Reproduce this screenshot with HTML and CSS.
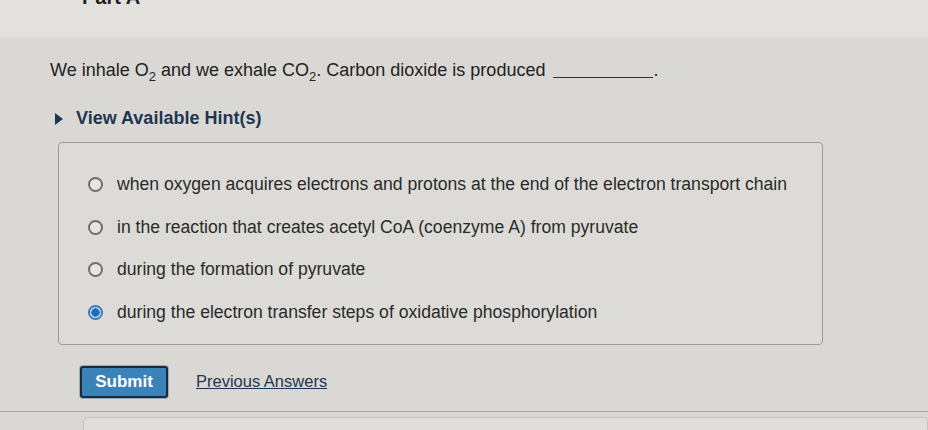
FILE: index.html
```html
<!DOCTYPE html>
<html lang="en">
<head>
    <meta charset="UTF-8">
    <title>Part A</title>
    <link rel="stylesheet" href="styles.css">
</head>
<body>
    <div class="top-strip">
        <h2 class="part-title">Part A</h2>
    </div>

    <div class="question">
        <p class="prompt">We inhale O<sub>2</sub> and we exhale CO<sub>2</sub>. Carbon dioxide is produced <span class="blank"></span>.</p>

        <div class="hints"><span class="caret"></span>View Available Hint(s)</div>

        <div class="choices">
            <label class="choice"><span class="radio"></span>when oxygen acquires electrons and protons at the end of the electron transport chain</label>
            <label class="choice"><span class="radio"></span>in the reaction that creates acetyl CoA (coenzyme A) from pyruvate</label>
            <label class="choice"><span class="radio"></span>during the formation of pyruvate</label>
            <label class="choice"><span class="radio checked"></span>during the electron transfer steps of oxidative phosphorylation</label>
        </div>

        <div class="actions">
            <button class="submit">Submit</button>
            <a href="#" class="prev">Previous Answers</a>
        </div>
    </div>

    <div class="next-part">
        <div class="next-box"></div>
    </div>
</body>
</html>
```

FILE: styles.css
```css
body {
    margin: 0;
    font-family: "Liberation Sans", Arial, sans-serif;
    background-color: #dad8d4;
    color: #2a2a2a;
    height: 430px;
    overflow: hidden;
}
.top-strip {
    height: 38px;
    background-color: #e2e1de;
    overflow: hidden;
}
.part-title {
    margin: -14px 0 0 82px;
    font-size: 20px;
    color: #222;
}
.question {
    padding: 19px 0 0 50px;
}
.prompt {
    margin: 0;
    font-size: 18px;
    line-height: 26px;
    color: #222;
}
.prompt sub {
    font-size: 13px;
    line-height: 0;
}
.blank {
    display: inline-block;
    width: 100px;
    margin-left: 3px;
    border-bottom: 1px solid #333;
    vertical-align: -2px;
}
.hints {
    margin: 25px 0 0 5px;
    font-size: 18px;
    font-weight: bold;
    color: #1f3552;
    display: flex;
    align-items: center;
}
.caret {
    width: 0;
    height: 0;
    border-top: 6px solid transparent;
    border-bottom: 6px solid transparent;
    border-left: 8px solid #1f3552;
    margin-right: 13px;
}
.choices {
    margin: 13px 0 0 8px;
    width: 763px;
    border: 1px solid #9a9a98;
    border-radius: 4px;
    padding: 20px 0 10px 0;
    background-color: #dcdbd7;
}
.choice {
    display: flex;
    align-items: center;
    height: 42.7px;
    padding-left: 29px;
    font-size: 17.6px;
    color: #2a2a2a;
}
.radio {
    width: 15px;
    height: 15px;
    border: 2px solid #6e6e6e;
    border-radius: 50%;
    box-sizing: border-box;
    margin-right: 14px;
    background-color: #e6e5e2;
    flex-shrink: 0;
}
.radio.checked {
    border: 2px solid #2f7cc4;
    background: radial-gradient(circle, #1f6fbf 0 4px, #e6e5e2 4.5px);
}
.actions {
    display: flex;
    align-items: center;
    margin: 21px 0 0 30px;
}
.submit {
    background-color: #3b82b8;
    color: #fff;
    border: 2px solid #1b2a36;
    box-shadow: 0 0 0 1px #9ab;
    border-radius: 3px;
    width: 88px;
    height: 32px;
    font-family: "Liberation Sans", Arial, sans-serif;
    font-size: 17px;
    font-weight: bold;
    cursor: pointer;
}
.prev {
    margin-left: 28px;
    font-size: 16.5px;
    color: #1f3552;
    text-decoration: underline;
}
.next-part {
    margin-top: 13px;
    border-top: 1px solid #a9a8a5;
    padding: 5px 0 0 83px;
}
.next-box {
    height: 40px;
    border: 1px solid #c4c3c0;
    border-radius: 4px;
    background-color: #dfdeda;
}
```
